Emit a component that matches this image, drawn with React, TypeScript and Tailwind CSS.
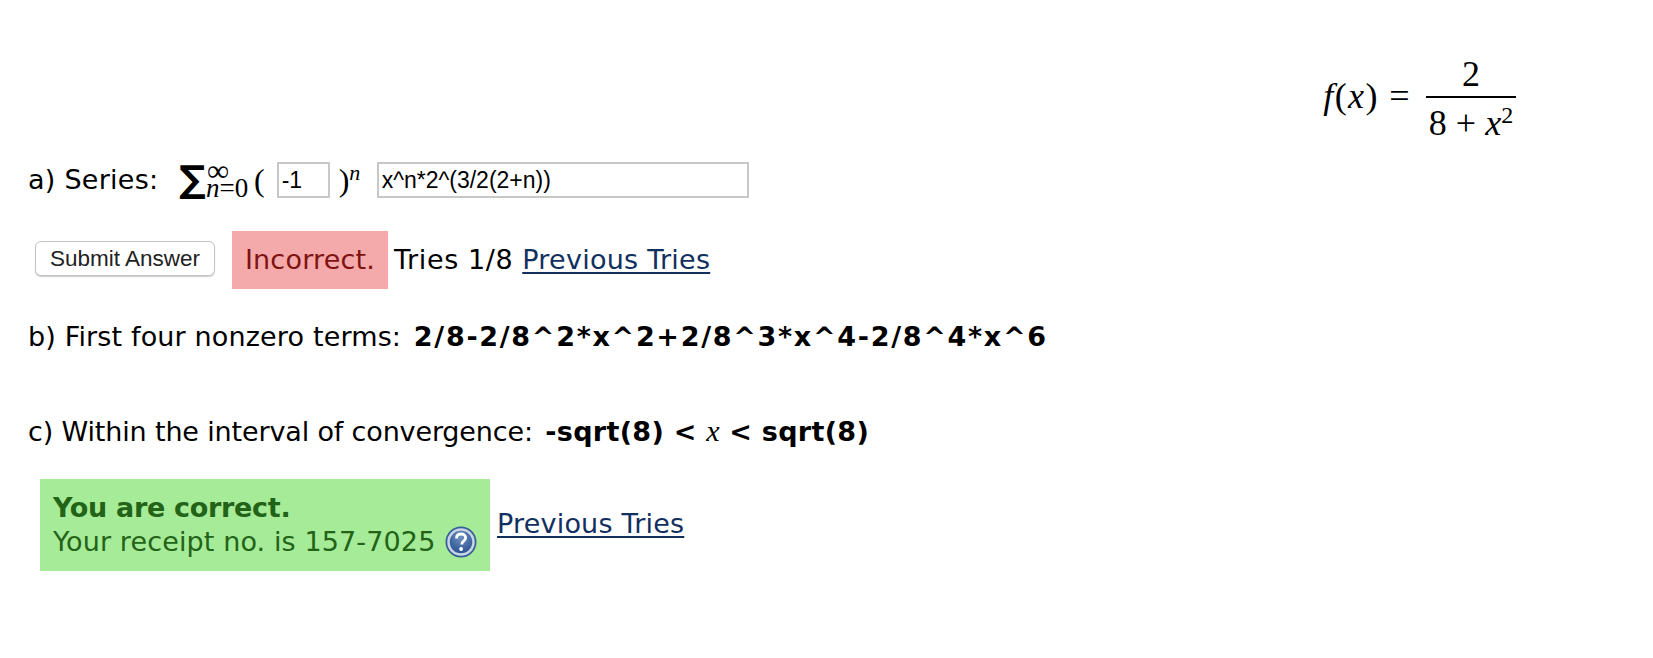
const verdana = "font-['DejaVu_Sans',sans-serif]";
const serif = "font-['Liberation_Serif',serif]";

function HelpIcon() {
  return (
    <svg width="32" height="32" viewBox="0 0 32 32" className="shrink-0">
      <defs>
        <radialGradient id="help-fill" cx="50%" cy="30%" r="70%">
          <stop offset="0%" stopColor="#6f90c0" />
          <stop offset="100%" stopColor="#27508f" />
        </radialGradient>
      </defs>
      <circle cx="16" cy="16" r="15.5" fill="#35609a" />
      <circle cx="16" cy="16" r="12.5" fill="url(#help-fill)" stroke="#c9d4e6" strokeWidth="2.5" />
      <path
        d="M11.5 12.5c0-2.9 2-4.5 4.6-4.5 2.7 0 4.5 1.6 4.5 3.8 0 1.8-1 2.7-2.3 3.7-1.1.8-1.5 1.4-1.5 3"
        fill="none"
        stroke="#fff"
        strokeWidth="2.8"
      />
      <circle cx="16.1" cy="23" r="1.9" fill="#fff" />
    </svg>
  );
}

function Link({ children }: { children: string }) {
  return <a className="text-[#12305f] underline decoration-2 underline-offset-[3px]">{children}</a>;
}

export default function App() {
  return (
    <div className={`${verdana} h-[658px] w-[1653px] overflow-hidden bg-white text-[27px] leading-[34px] text-black`}>
      <div className={`${serif} flex justify-end pt-[54px] pr-[137px] text-[36px] leading-[40px]`}>
        <div className="flex items-center gap-[15px]">
          <span className="tracking-[1.4px]">
            <i>f</i>(<i>x</i>) =
          </span>
          <div className="flex w-[90px] flex-col items-center">
            <span className="h-[42px]">2</span>
            <div className="h-[2px] w-full bg-black" />
            <span className="h-[40px] whitespace-nowrap pt-[5px]">
              8 + <i>x</i>
              <sup className="text-[24px]">2</sup>
            </span>
          </div>
        </div>
      </div>

      <div className="mt-[24px] flex h-[36px] items-center pl-[28px]">
        <span className="w-[151px] tracking-[0.25px]">a) Series:</span>
        <span className={`${serif} flex items-center`}>
          <span className="w-[26px] font-['DejaVu_Sans',sans-serif] text-[37px] font-bold leading-[36px]">∑</span>
          <span className="flex w-[49px] flex-col text-[27px]">
            <span className="h-[17px] pl-[2px] text-[31px] leading-[17px]">∞</span>
            <span className="h-[19px] pl-[1px] leading-[19px]"><i>n</i>=0</span>
          </span>
          <span className="text-[32px]">(</span>
        </span>
        <input
          readOnly
          value="-1"
          className="ml-[12px] h-[36px] w-[53px] border-2 border-[#c8c8c8] px-[3px] font-['Liberation_Sans',sans-serif] text-[23px] outline-none"
        />
        <span className={`${serif} ml-[9px] w-[38px] text-[32px]`}>
          )<sup className="text-[22px]"><i>n</i></sup>
        </span>
        <input
          readOnly
          value="x^n*2^(3/2(2+n))"
          className="h-[36px] w-[372px] border-2 border-[#c8c8c8] px-[3px] font-['Liberation_Sans',sans-serif] text-[23px] outline-none"
        />
      </div>

      <div className="mt-[33px] flex items-center pl-[35px]">
        <button className="-mt-[3px] h-[35px] w-[180px] rounded-[6px] border border-[#c4c4c4] bg-white font-['Liberation_Sans',sans-serif] text-[22.5px] text-[#222] shadow-[0_1px_1px_rgba(0,0,0,0.2)]">
          Submit Answer
        </button>
        <span className="ml-[17px] flex h-[58px] w-[156px] items-center justify-center bg-[#f4aaaa] tracking-[0.2px] text-[#7f1212]">
          Incorrect.
        </span>
        <span className="ml-[6px] tracking-[0.6px]">Tries 1/8</span>
        <span className="ml-[9px] tracking-[0.25px]"><Link>Previous Tries</Link></span>
      </div>

      <p className="mt-[31px] pl-[28px] tracking-[0.15px]">
        b) First four nonzero terms: <b className="ml-[4px] tracking-[1.7px]">2/8-2/8^2*x^2+2/8^3*x^4-2/8^4*x^6</b>
      </p>

      <p className="mt-[60px] pl-[28px] tracking-[-0.15px]">
        c) Within the interval of convergence: <b className="ml-[4px] tracking-[0.3px]">-sqrt(8) &lt; </b>
        <i className={`${serif} text-[30px]`}>x</i>
        <b className="tracking-[0.3px]"> &lt; sqrt(8)</b>
      </p>

      <div className="mt-[30px] ml-[40px] flex items-center">
        <div className="flex h-[92px] w-[450px] flex-col justify-center bg-[#a6eb97] pl-[13px] text-[#236317]">
          <b className="tracking-[-0.3px]">You are correct.</b>
          <span className="flex items-center gap-[10px] tracking-[0.12px]">
            Your receipt no. is 157-7025
            <HelpIcon />
          </span>
        </div>
        <span className="ml-[7px] -mt-[2px] tracking-[0.2px]"><Link>Previous Tries</Link></span>
      </div>
    </div>
  );
}
